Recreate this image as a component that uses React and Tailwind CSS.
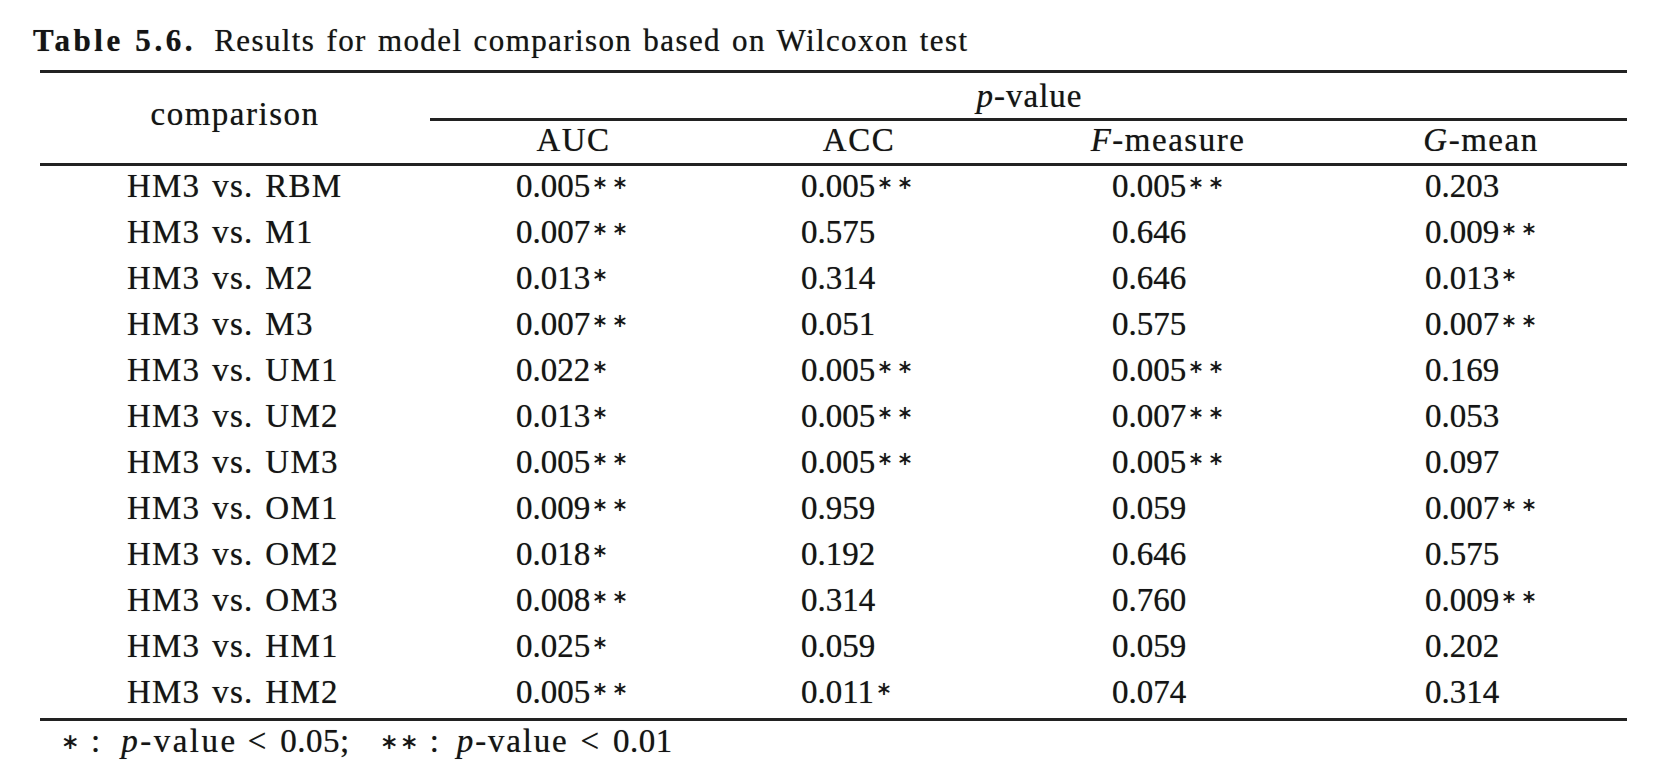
import React from "react";

const rows = [
  ["HM3 vs. RBM", "0.005**", "0.005**", "0.005**", "0.203"],
  ["HM3 vs. M1", "0.007**", "0.575", "0.646", "0.009**"],
  ["HM3 vs. M2", "0.013*", "0.314", "0.646", "0.013*"],
  ["HM3 vs. M3", "0.007**", "0.051", "0.575", "0.007**"],
  ["HM3 vs. UM1", "0.022*", "0.005**", "0.005**", "0.169"],
  ["HM3 vs. UM2", "0.013*", "0.005**", "0.007**", "0.053"],
  ["HM3 vs. UM3", "0.005**", "0.005**", "0.005**", "0.097"],
  ["HM3 vs. OM1", "0.009**", "0.959", "0.059", "0.007**"],
  ["HM3 vs. OM2", "0.018*", "0.192", "0.646", "0.575"],
  ["HM3 vs. OM3", "0.008**", "0.314", "0.760", "0.009**"],
  ["HM3 vs. HM1", "0.025*", "0.059", "0.059", "0.202"],
  ["HM3 vs. HM2", "0.005**", "0.011*", "0.074", "0.314"],
];

// column paddings so values line up like the latex table
const pads = ["pl-[87px]", "pl-[86px]", "pl-[84px]", "pl-[111px]", "pl-[90px]"];

const Value = ({ v }) => {
  const num = v.replace(/\*/g, "");
  const stars = v.length - num.length;
  return (
    <span>
      {num}
      {stars > 0 && (
        <span className="relative top-[-8px] text-[19px] tracking-[4px] ml-[2px]">
          {"∗".repeat(stars)}
        </span>
      )}
    </span>
  );
};

const Rule = () => <div className="h-[3px] bg-[#222]" />;

export default function App() {
  return (
    <div
      className="w-[1671px] h-[780px] bg-white text-[#141414] overflow-hidden [text-shadow:0_0_0.7px_rgba(0,0,0,0.55)]"
      style={{ fontFamily: '"Liberation Serif", "Times New Roman", serif' }}
    >
      <div className="pt-[23px] pl-[33px] h-[70px]">
        <div className="text-[31px] leading-[36px] whitespace-nowrap">
          <span className="font-bold tracking-[3.6px]">Table 5.6.</span>
          <span className="ml-[18px] tracking-[1.4px] [word-spacing:2px]">
            Results for model comparison based on Wilcoxon test
          </span>
        </div>
      </div>

      <div className="ml-[40px] w-[1587px] text-[33px]">
        <Rule />

        {/* header */}
        <div className="flex">
          <div className="w-[390px] flex items-center justify-center pb-[8px] tracking-[1.5px] leading-[40px]">
            comparison
          </div>
          <div className="flex-1">
            <div className="h-[45px] pt-[3px] leading-[40px] text-center pl-[2px] tracking-[1px]">
              <i>p</i>-value
            </div>
            <Rule />
            <div className="grid grid-cols-[287px_284px_334px_292px] h-[42px] leading-[38px] text-center tracking-[1.5px]">
              <div>AUC</div>
              <div>ACC</div>
              <div>
                <i>F</i>-measure
              </div>
              <div>
                <i>G</i>-mean
              </div>
            </div>
          </div>
        </div>
        <Rule />

        {/* body */}
        <div>
          {rows.map((r) => (
            <div
              key={r[0]}
              className="grid grid-cols-[390px_287px_284px_334px_292px] h-[46px] leading-[40px] whitespace-nowrap"
            >
              {r.map((c, i) => (
                <div key={i} className={pads[i]}>
                  {i === 0 ? (
                    <span className="tracking-[1.2px] [word-spacing:2.5px]">{c}</span>
                  ) : (
                    <Value v={c} />
                  )}
                </div>
              ))}
            </div>
          ))}
        </div>
        <Rule />

        <div className="pl-[21px] text-[33px] leading-[40px] whitespace-nowrap">
          <span className="text-[22px] relative top-[-3px]">∗</span>
          <span className="ml-[12px]">:</span>
          <span className="ml-[21px] tracking-[2.5px]">
            <i>p</i>-value
          </span>
          <span className="ml-[10px]">&lt;</span>
          <span className="ml-[14px] tracking-[0.5px]">0.05;</span>
          <span className="ml-[30px] text-[22px] relative top-[-3px] tracking-[2px]">∗∗</span>
          <span className="ml-[10px]">:</span>
          <span className="ml-[18px] tracking-[1.8px]">
            <i>p</i>-value
          </span>
          <span className="ml-[12px]">&lt;</span>
          <span className="ml-[14px] tracking-[0.5px]">0.01</span>
        </div>
      </div>
    </div>
  );
}
